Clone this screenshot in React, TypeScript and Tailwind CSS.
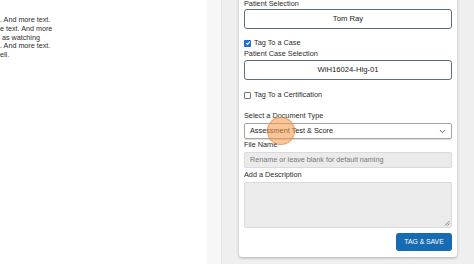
import React from 'react';
import { ChevronDown } from 'lucide-react';

const leftLines = ['. And more text.', 'e text. And more', ' as watching', '. And more text.', 'ell.'];

const Label: React.FC<{ text: string; className?: string }> = ({ text, className = '' }) => (
  <div className={`h-[10px] leading-[10px] text-[7.3px] text-[#2b2b2b] ${className}`}>{text}</div>
);

const CheckRow: React.FC<{ text: string; checked?: boolean; className?: string }> = ({ text, checked, className = '' }) => (
  <div className={`flex items-center h-[10px] gap-[3px] ${className}`}>
    {checked ? (
      <span className="w-[7px] h-[7px] rounded-[1px] bg-[#1e6fd0] flex items-center justify-center">
        <svg width="6" height="6" viewBox="0 0 10 10">
          <path d="M2 5.2 L4.2 7.4 L8.2 2.8" fill="none" stroke="white" strokeWidth="1.8" />
        </svg>
      </span>
    ) : (
      <span className="w-[7px] h-[7px] rounded-[1px] border border-[#767676] bg-white" />
    )}
    <span className="text-[7.3px] leading-[10px] text-[#2b2b2b]">{text}</span>
  </div>
);

const App: React.FC = () => {
  return (
    <div className="flex w-[474px] h-[264px] overflow-hidden bg-white font-['Liberation_Sans',Arial,sans-serif]">
      <div className="w-[207px] pt-[16px] text-[7.2px] leading-[8.75px] text-[#2b2b2b] whitespace-pre">
        {leftLines.map((l, i) => (
          <div key={i}>{l}</div>
        ))}
      </div>
      <div className="w-[15px] bg-[#f7f7f7] border-r border-[#e2e2e2]" />
      <div className="flex-1 bg-[#efefef] pl-[17px] pr-[17px]">
        <div className="relative -mt-[6px] bg-white rounded-[3px] shadow-[0_1px_3px_rgba(0,0,0,0.28)] px-[5px] pt-[5px] pb-[6px]">
          <Label text="Patient Selection" />
          <div className="h-[20px] border border-[#5d6d7a] rounded-[3px] flex items-center justify-center text-[7.7px] text-[#222]">
            Tom Ray
          </div>
          <CheckRow text="Tag To a Case" checked className="mt-[9px]" />
          <Label text="Patient Case Selection" className="mt-[1px]" />
          <div className="mt-[1px] h-[20px] border border-[#5d6d7a] rounded-[3px] flex items-center justify-center text-[7.7px] text-[#222]">
            WiH16024-Hig-01
          </div>
          <CheckRow text="Tag To a Certification" className="mt-[10px]" />
          <Label text="Select a Document Type" className="mt-[11px]" />
          <div className="mt-[2px] h-[16px] border border-[#a5a5a5] rounded-[2px] shadow-[0_1px_1px_rgba(0,0,0,0.15)] flex items-center justify-between pl-[5px] pr-[4px] text-[7.3px] text-[#222]">
            <span>Assessment Test &amp; Score</span>
            <ChevronDown size={9} strokeWidth={2} className="text-[#333]" />
          </div>
          <Label text="File Name" className="mt-[1px]" />
          <div className="mt-[2px] h-[16px] border border-[#dadada] bg-[#ebebeb] rounded-[2px] flex items-center pl-[5px] text-[7.2px] text-[#777]">
            Rename or leave blank for default naming
          </div>
          <Label text="Add a Description" className="mt-[2px]" />
          <div className="relative mt-[2px] h-[46px] border border-[#dadada] bg-[#ebebeb] rounded-[2px]">
            <svg className="absolute right-[1px] bottom-[1px]" width="6" height="6" viewBox="0 0 6 6">
              <path d="M5.5 1 L1 5.5 M5.5 3.5 L3.5 5.5" stroke="#666" strokeWidth="0.8" />
            </svg>
          </div>
          <div className="mt-[5px] flex justify-end">
            <button className="w-[56px] h-[18px] rounded-[3px] bg-[#176bb2] text-white text-[6.8px] leading-none">
              TAG &amp; SAVE
            </button>
          </div>
          <div className="absolute left-[28px] top-[123px] w-[28px] h-[28px] rounded-full bg-[rgba(245,150,70,0.55)] border border-[rgba(225,120,40,0.5)]" />
        </div>
      </div>
    </div>
  );
};

export default App;
